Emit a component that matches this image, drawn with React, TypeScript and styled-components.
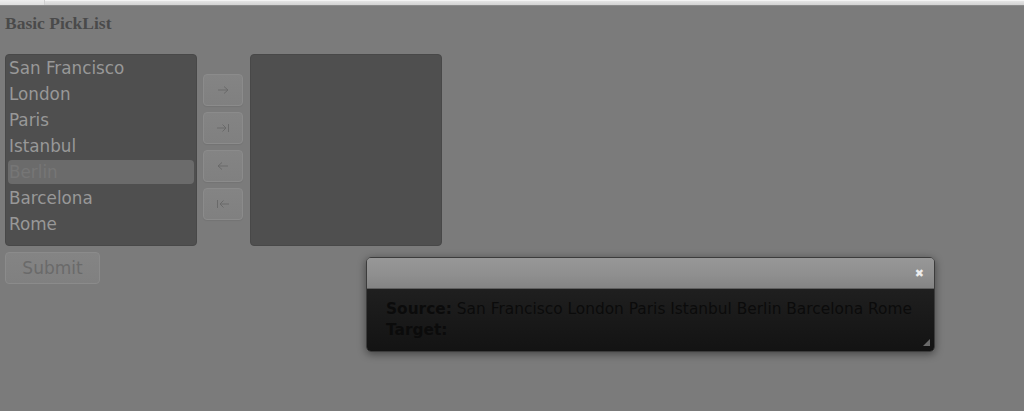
import styled, { createGlobalStyle } from "styled-components";
import { useState } from "react";

const cities = ["San Francisco", "London", "Paris", "Istanbul", "Berlin", "Barcelona", "Rome"];

const GlobalStyle = createGlobalStyle`
  html, body {
    margin: 0;
    padding: 0;
    background: #7b7b7b;
    height: 100%;
    overflow: hidden;
  }
`;

export default function App() {
  const [selected, setSelected] = useState("Berlin");

  return (
    <>
      <GlobalStyle />
      <TopStrip>
        <div className="tab" />
        <div className="rest" />
      </TopStrip>
      <Page>
        <Heading>Basic PickList</Heading>
        <PickList>
          <ListBox>
            {cities.map((c) => (
              <Item key={c} $active={c === selected} onClick={() => setSelected(c)}>
                {c}
              </Item>
            ))}
          </ListBox>
          <Controls>
            <MoveButton title="Add">
              <Arrow d="M2 6h10M8 2.5L12 6 8 9.5" />
            </MoveButton>
            <MoveButton title="Add All">
              <Arrow d="M1 6h9M6.5 2.5L10 6 6.5 9.5M12.5 2v8" />
            </MoveButton>
            <MoveButton title="Remove">
              <Arrow d="M12 6H2M6 2.5L2 6 6 9.5" />
            </MoveButton>
            <MoveButton title="Remove All">
              <Arrow d="M13 6H4M7.5 2.5L4 6 7.5 9.5M1.5 2v8" />
            </MoveButton>
          </Controls>
          <ListBox />
        </PickList>
        <SubmitButton>Submit</SubmitButton>
      </Page>

      <Dialog>
        <TitleBar>
          <CloseIcon>✖</CloseIcon>
        </TitleBar>
        <DialogBody>
          <div>
            <b>Source:</b> {cities.join(" ")}
          </div>
          <div>
            <b>Target:</b>
          </div>
          <Grip viewBox="0 0 8 8">
            <path d="M8 0L8 8 0 8Z" fill="#6a6a6a" />
          </Grip>
        </DialogBody>
      </Dialog>
    </>
  );
}

function Arrow({ d }: { d: string }) {
  return (
    <svg width="14" height="12" viewBox="0 0 14 12" fill="none" stroke="#6a6a6a" strokeWidth="1">
      <path d={d} />
    </svg>
  );
}

const TopStrip = styled.div`
  display: flex;
  height: 5px;
  border-bottom: 1px solid #8a8a8a;

  .tab {
    width: 44px;
    background: linear-gradient(#eeeeee, #dedede);
    border-right: 1px solid #cfcfcf;
  }
  .rest {
    flex: 1;
    border-top: 1px solid #f4f4f4;
    background: linear-gradient(#e4e4e4, #d2d2d2);
  }
`;

const Page = styled.div`
  padding: 7px 5px;
`;

const Heading = styled.h1`
  margin: 0 0 20px;
  font-family: "Liberation Serif", "Times New Roman", serif;
  font-size: 17.5px;
  line-height: 21px;
  font-weight: bold;
  color: #4a4a4a;
`;

const PickList = styled.div`
  display: flex;
  align-items: flex-start;
  gap: 6px;
`;

const ListBox = styled.ul`
  margin: 0;
  padding: 1px 1px;
  list-style: none;
  width: 192px;
  height: 192px;
  box-sizing: border-box;
  background: #4f4f4f;
  border: 1px solid #484848;
  border-radius: 4px;
`;

const Item = styled.li<{ $active: boolean }>`
  margin: 0 1px 2px;
  padding: 0 1px;
  height: 24px;
  line-height: 24px;
  border-radius: 4px;
  font-family: "DejaVu Sans", Verdana, sans-serif;
  font-size: 16.8px;
  color: ${(p) => (p.$active ? "#767676" : "#989898")};
  background: ${(p) => (p.$active ? "#6b6b6b" : "transparent")};
  cursor: pointer;
`;

const Controls = styled.div`
  display: flex;
  flex-direction: column;
  gap: 6px;
  margin-top: 20px;
  margin-right: 1px;
`;

const MoveButton = styled.button`
  width: 40px;
  height: 32px;
  padding: 0;
  display: flex;
  align-items: center;
  justify-content: center;
  background: linear-gradient(#848484, #808080);
  border: 1px solid #8b8b8b;
  border-radius: 4px;
  box-shadow: 0 1px 1px rgba(0, 0, 0, 0.06);
`;

const SubmitButton = styled.button`
  margin-top: 6px;
  width: 95px;
  height: 32px;
  padding: 0;
  background: linear-gradient(#848484, #808080);
  border: 1px solid #8b8b8b;
  border-radius: 4px;
  font-family: "DejaVu Sans", Verdana, sans-serif;
  font-size: 17px;
  color: #6a6a6a;
`;

const Dialog = styled.div`
  position: fixed;
  left: 366px;
  top: 257px;
  width: 569px;
  box-sizing: border-box;
  border: 1px solid #3c3c3c;
  border-radius: 5px;
  overflow: hidden;
  box-shadow: 0 2px 8px rgba(0, 0, 0, 0.45);
`;

const TitleBar = styled.div`
  height: 30px;
  display: flex;
  align-items: center;
  justify-content: flex-end;
  padding-right: 10px;
  background: linear-gradient(#979797, #8e8e8e 60%, #848484);
  border-bottom: 1px solid #5e5e5e;
`;

const CloseIcon = styled.span`
  font-family: "DejaVu Sans", sans-serif;
  font-size: 11px;
  color: #ececec;
  line-height: 1;
`;

const DialogBody = styled.div`
  position: relative;
  height: 62px;
  box-sizing: border-box;
  padding: 10px 19px 8px;
  background: linear-gradient(#1f1f1f, #131313);
  font-family: "DejaVu Sans", Verdana, sans-serif;
  font-size: 15.4px;
  line-height: 21px;
  color: #0b0b0b;
  white-space: nowrap;

  b {
    font-weight: bold;
  }
`;

const Grip = styled.svg`
  position: absolute;
  right: 4px;
  bottom: 5px;
  width: 7px;
  height: 7px;
`;
